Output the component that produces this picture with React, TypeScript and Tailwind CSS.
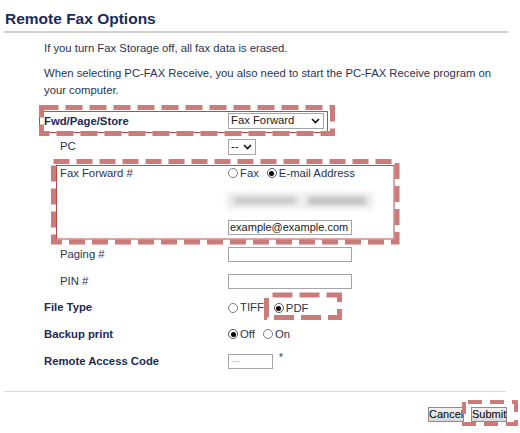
import type { ReactNode } from 'react';

const dash = '#cc7b7b';
const thin = '#c04848';

function Radio({ checked }: { checked?: boolean }) {
  return (
    <span
      className={`inline-flex w-[10px] h-[10px] rounded-full border bg-white items-center justify-center ${
        checked ? 'border-[#555]' : 'border-[#7c7c7c]'
      }`}
    >
      {checked && <span className="w-[5px] h-[5px] rounded-full bg-black" />}
    </span>
  );
}

function Choice({ label, checked }: { label: string; checked?: boolean }) {
  return (
    <span className="inline-flex items-center gap-[2px]">
      <Radio checked={checked} />
      <span>{label}</span>
    </span>
  );
}

function Select({ value, width }: { value: string; width: string }) {
  return (
    <div
      className={`${width} h-[16px] border border-[#a5a5a5] bg-white flex items-center justify-between pl-[2px] pr-[3px] text-[#222]`}
    >
      <span className="leading-none">{value}</span>
      <svg width="9" height="6" viewBox="0 0 9 6">
        <path d="M1 1l3.5 3.5L8 1" fill="none" stroke="#111" strokeWidth="1.6" />
      </svg>
    </div>
  );
}

function TextBox({ value, width = 'w-[124px]' }: { value?: string; width?: string }) {
  return (
    <div className={`${width} h-[15px] border border-[#a5a5a5] bg-white px-[1px] flex items-center text-[11px] text-[#222]`}>
      {value}
    </div>
  );
}

function Row({
  h,
  label,
  bold,
  indent,
  children,
}: {
  h: string;
  label?: string;
  bold?: boolean;
  indent?: boolean;
  children?: ReactNode;
}) {
  return (
    <div className={`${h} grid grid-cols-[184px_1fr] items-center`}>
      <div className={`${indent ? 'pl-[16px]' : ''} ${bold ? 'font-bold text-[#1b2a56]' : 'text-[#2b3350]'}`}>
        {label}
      </div>
      <div className="flex items-center gap-[8px] text-[#2b3350]">{children}</div>
    </div>
  );
}

export default function App() {
  return (
    <div className="relative w-[520px] h-[433px] bg-white overflow-hidden font-['Liberation_Sans',Arial,sans-serif] text-[11.3px]">
      <div className="pl-[5px] pt-[9px] text-[15.5px] leading-[20px] font-bold text-[#1a2c5b]">Remote Fax Options</div>
      <div className="ml-[4px] mt-[2px] w-[504px] border-t-2 border-[#d0d0d0]" />

      <div className="pl-[44px] pr-[20px] leading-[17px] text-[#2b3350]">
        <p className="mt-[7px]">If you turn Fax Storage off, all fax data is erased.</p>
        <p className="mt-[8px]">
          When selecting PC-FAX Receive, you also need to start the PC-FAX Receive program on your computer.
        </p>
      </div>

      <div className="pl-[44px] mt-[9px]">
        <Row h="h-[26px]" label="Fwd/Page/Store" bold>
          <Select value="Fax Forward" width="w-[96px]" />
        </Row>
        <Row h="h-[25px]" label="PC" indent>
          <Select value="--" width="w-[28px]" />
        </Row>
        <Row h="h-[28px]" label="Fax Forward #" indent>
          <Choice label="Fax" />
          <Choice label="E-mail Address" checked />
        </Row>
        <Row h="h-[27px]">
          <div className="w-[148px] h-[17px] -ml-[2px] bg-[#eeeeee] blur-[2.5px] flex items-center gap-[12px] px-[8px]">
            <span className="w-[62px] h-[7px] bg-[#c8c8c8]" />
            <span className="w-[58px] h-[8px] bg-[#c0c0c0]" />
          </div>
        </Row>
        <Row h="h-[27px]">
          <TextBox value="example@example.com" />
        </Row>
        <Row h="h-[27px]" label="Paging #" indent>
          <TextBox />
        </Row>
        <Row h="h-[26px]" label="PIN #" indent>
          <TextBox />
        </Row>
        <Row h="h-[27px]" label="File Type" bold>
          <Choice label="TIFF" />
          <span className="ml-[2px]">
            <Choice label="PDF" checked />
          </span>
        </Row>
        <Row h="h-[26px]" label="Backup print" bold>
          <Choice label="Off" checked />
          <Choice label="On" />
        </Row>
        <Row h="h-[28px]" label="Remote Access Code" bold>
          <div className="w-[45px] h-[15px] border border-[#a5a5a5] bg-white px-[2px] flex items-center text-[8px] text-[#999] tracking-[0.5px]">
            ---
          </div>
          <span className="-ml-[2px] -mt-[8px] text-[10px] text-[#333]">*</span>
        </Row>
      </div>

      <div className="ml-[4px] mt-[16px] w-[502px] border-t border-[#d8d8d8]" />

      <div className="mt-[15px] pr-[13px] flex justify-end gap-[7px]">
        <button className="w-[36px] h-[15px] border border-[#8c8c8c] bg-gradient-to-b from-[#f2f2f2] to-[#d9d9d9] text-[11px] leading-none text-black">
          Cancel
        </button>
        <button className="w-[36px] h-[15px] border border-[#8c8c8c] bg-gradient-to-b from-[#f2f2f2] to-[#d9d9d9] text-[11px] leading-none text-black">
          Submit
        </button>
      </div>

      {/* annotation marks laid over the page */}
      <svg className="absolute inset-0 pointer-events-none" width="520" height="433">
        <rect x="39.5" y="111.5" width="288" height="21" fill="none" stroke={thin} strokeWidth="1" />
        <rect x="41.5" y="107.5" width="291" height="26" fill="none" stroke={dash} strokeWidth="5" strokeDasharray="17 7" />
        <rect x="56.5" y="165.5" width="337.5" height="73.5" fill="none" stroke={thin} strokeWidth="1" />
        <rect x="53.5" y="161.5" width="343.5" height="80.5" fill="none" stroke={dash} strokeWidth="5" strokeDasharray="16 7" />
        <rect x="266.5" y="295" width="73" height="22.5" fill="none" stroke={dash} strokeWidth="5" strokeDasharray="20 7" strokeDashoffset="-6" />
        <rect x="464" y="402" width="52" height="22" fill="none" stroke={dash} strokeWidth="4" strokeDasharray="14 8" strokeDashoffset="-4" />
      </svg>
    </div>
  );
}
